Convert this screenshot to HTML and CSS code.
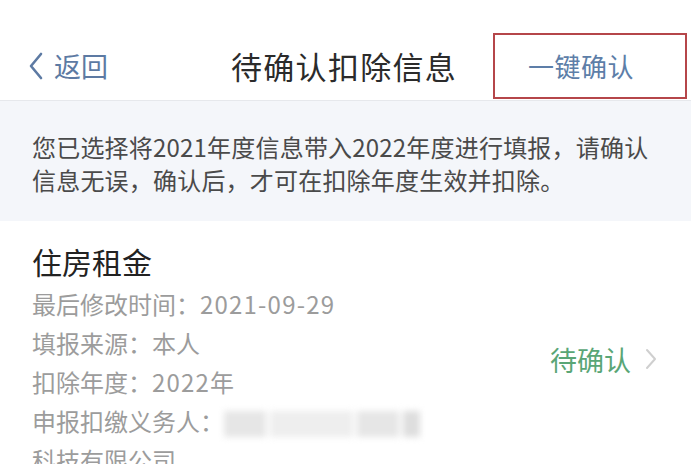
FILE: index.html
```html
<!DOCTYPE html>
<html lang="zh-CN">
<head>
  <meta charset="UTF-8">
  <meta name="viewport" content="width=device-width, initial-scale=1.0">
  <title>待确认扣除信息</title>
  <link rel="stylesheet" href="styles.css">
</head>
<body>
  <!-- 顶部导航 -->
  <header class="nav">
    <a class="nav-back" href="#">
      <svg class="nav-back-icon" viewBox="0 0 16 28" width="16" height="28">
        <path d="M13 2 L3 14 L13 26" fill="none" stroke="#5d7aa3" stroke-width="2.6" stroke-linecap="round" stroke-linejoin="round"/>
      </svg>
      <span>返回</span>
    </a>
    <h1 class="nav-title">待确认扣除信息</h1>
    <a class="nav-action" href="#">一键确认</a>
  </header>

  <!-- 提示说明 -->
  <div class="notice">
    <p>您已选择将2021年度信息带入2022年度进行填报，请确认信息无误，确认后，才可在扣除年度生效并扣除。</p>
  </div>

  <!-- 扣除项目 -->
  <section class="item">
    <div class="item-info">
      <h2 class="item-title">住房租金</h2>
      <p class="item-row">最后修改时间：<span class="num">2021-09-29</span></p>
      <p class="item-row">填报来源：本人</p>
      <p class="item-row">扣除年度：<span class="num">2022</span>年</p>
      <p class="item-row">申报扣缴义务人：<span class="masked"><i></i><i></i><i></i><i></i></span></p>
      <p class="item-row">科技有限公司</p>
    </div>
    <a class="item-status" href="#">
      <span>待确认</span>
      <svg viewBox="0 0 12 24" width="12" height="24">
        <path d="M2 3 L10 12 L2 21" fill="none" stroke="#cfcfcf" stroke-width="2" stroke-linecap="round" stroke-linejoin="round"/>
      </svg>
    </a>
  </section>
</body>
</html>
```

FILE: styles.css
```css
* {
  box-sizing: border-box;
  margin: 0;
  padding: 0;
}
body {
  background: #fff;
  color: #333;
  font-family: "Noto Sans CJK SC", "Noto Sans", sans-serif;
  overflow: hidden;
}
a {
  text-decoration: none;
}

/* 顶部导航 */
.nav {
  display: flex;
  align-items: center;
  height: 101px;
  padding: 33px 4px 2px 28px;
  border-bottom: 1px solid #e6e8ec;
}
.nav-back {
  display: flex;
  align-items: center;
  gap: 10px;
  color: #5d7aa3;
  font-size: 27px;
  width: 203px;
}
.nav-title {
  font-size: 31px;
  font-weight: 400;
  color: #2b2b2b;
  letter-spacing: 1.3px;
  width: 262px;
}
.nav-action {
  display: flex;
  align-items: center;
  justify-content: center;
  width: 194px;
  height: 66px;
  border: 2px solid #b5464a;
  color: #5d7ea8;
  font-size: 26px;
  letter-spacing: 0.5px;
  padding-right: 18px;
}

/* 提示说明 */
.notice {
  background: #f4f6fa;
  padding: 29px 30px 22px 32px;
  height: 120px;
}
.notice p {
  font-size: 24px;
  line-height: 33px;
  letter-spacing: 0.2px;
  color: #4a4a4a;
  max-width: 620px;
}

/* 扣除项目 */
.item {
  display: flex;
  align-items: center;
  padding: 18px 34px 0 32px;
}
.item-info {
  flex: 1;
}
.item-title {
  font-size: 30px;
  font-weight: 400;
  color: #222;
  line-height: 44px;
  margin-bottom: 1px;
}
.item-row {
  font-size: 24px;
  line-height: 39px;
  color: #9c9c9c;
  white-space: nowrap;
}
.item-row .num {
  letter-spacing: 1.2px;
}
.masked {
  display: inline-flex;
  vertical-align: middle;
  width: 196px;
  height: 26px;
  gap: 4px;
  filter: blur(3px);
}
.masked i {
  flex: 1;
  background: #e6e6e6;
}
.masked i:nth-child(2) {
  background: #eeeeee;
  flex: 2;
}
.masked i:nth-child(4) {
  background: #dedede;
  flex: 0.4;
}
.item-status {
  display: flex;
  align-items: center;
  gap: 14px;
  color: #5aa676;
  font-size: 27px;
}
```
